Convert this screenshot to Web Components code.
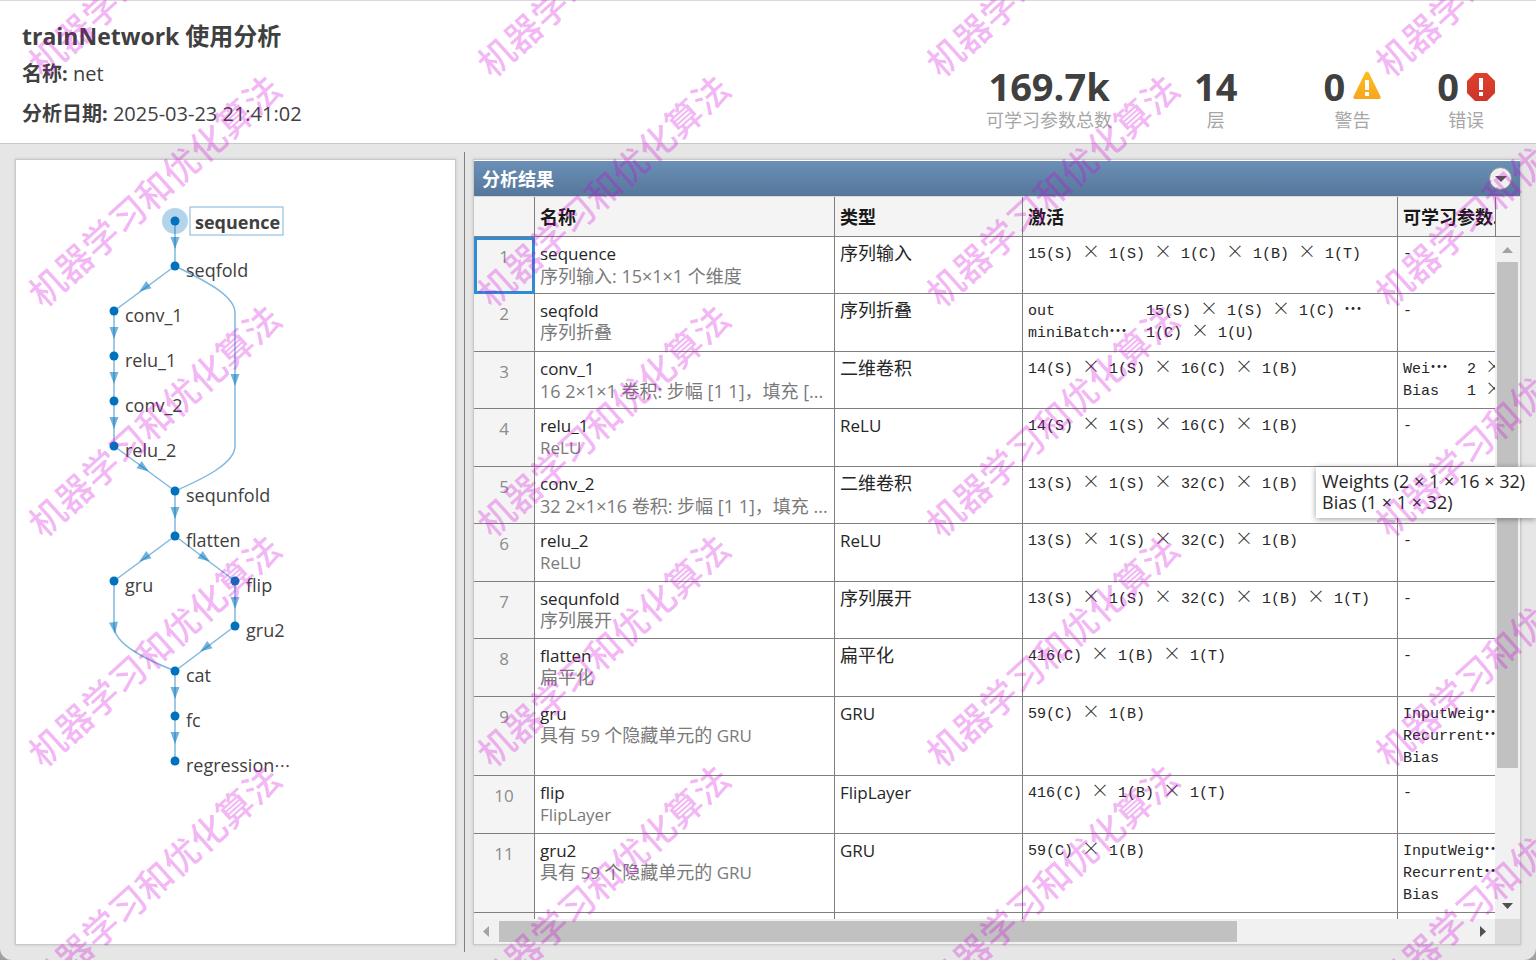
<!DOCTYPE html>
<html lang="zh-CN">
<head>
<meta charset="utf-8">
<title>trainNetwork 使用分析</title>
<style>
  body {
    margin: 0;
    background: #a0a0a0;
    font-family: "Open Sans", "Noto Sans CJK SC", sans-serif;
    font-size: 17px;
    color: #404040;
  }
</style>
</head>
<body>
<analyzer-app></analyzer-app>

<script>
// Chinese runs are set slightly larger than the latin text around them
const mixed = (text) => text.replace(/[\u3000-\u9fff\uff00-\uffef]+/g, '<span class="zh">$&</span>')
// x and ... take two columns of the monospaced text
const mono = (text) => text
  .replace(/×/g, '<span class="wide">×</span>')
  .replace(/…/g, '<span class="wide dots">…</span>')

const attach = (el, html) => {
  const template = document.createElement('template')
  template.innerHTML = html
  el.attachShadow({ mode: 'open' }).appendChild(template.content.cloneNode(true))
}

class StatItem extends HTMLElement {
  connectedCallback() {
    attach(this, `
<style>
  :host { display: flex; flex-direction: column; align-items: center; }
  .value {
    display: flex;
    align-items: center;
    gap: 8px;
    height: 40px;
    font-size: 38px;
    line-height: 40px;
    font-weight: bold;
  }
  .label { font-size: 18px; line-height: 28px; color: #a6a6a6; }
</style>
<div class="value">${this.getAttribute('value')}<slot></slot></div>
<div class="label">${this.getAttribute('label')}</div>`)
  }
}

class AnalyzerHeader extends HTMLElement {
  connectedCallback() {
    attach(this, `
<style>
  :host {
    display: flex;
    justify-content: space-between;
    padding: 17px 41px 9px 22px;
    background: #fff;
    border-top: 1px solid #d9d9d9;
    border-bottom: 1px solid #c8c8c8;
  }
  h1 { margin: 0; font-size: 23px; line-height: 36px; }
  h1 .zh { font-size: 24px; }
  p { margin: 0; font-size: 20px; line-height: 40px; }
  .stats { display: flex; gap: 56px; padding-top: 48px; }
  .layers { margin: 0 30px 0 26px; }
</style>
<div>
  <h1>${mixed('trainNetwork 使用分析')}</h1>
  <p><b>名称:</b> net</p>
  <p><b>分析日期:</b> 2025-03-23 21:41:02</p>
</div>
<div class="stats">
  <stat-item value="169.7k" label="可学习参数总数"></stat-item>
  <stat-item class="layers" value="14" label="层"></stat-item>
  <stat-item value="0" label="警告">
    <svg width="28" height="30" viewBox="0 0 28 30">
      <defs><linearGradient id="w" x2="0" y2="1"><stop stop-color="#fbbf1c"/><stop offset="1" stop-color="#f9a51f"/></linearGradient></defs>
      <path d="M12 2Q14-1 16 2L27.500 25.500Q28 28 26 28H2Q0 28 .5 25.500Z" fill="url(#w)"/>
      <path d="M12 9h4v10h-4zM12 21h4v4h-4z" fill="#fff"/>
    </svg>
  </stat-item>
  <stat-item value="0" label="错误">
    <svg width="28" height="30" viewBox="0 0 28 30">
      <defs><linearGradient id="e" x2="0" y2="1"><stop stop-color="#e0402d"/><stop offset="1" stop-color="#cb3529"/></linearGradient></defs>
      <path d="M8 2h12l8 8v12l-8 8H8l-8-8V10z" fill="url(#e)"/>
      <path d="M12 7h4v12h-4zM12 21h4v4h-4z" fill="#fff"/>
    </svg>
  </stat-item>
</div>`)
  }
}

// [label, x, y] inside the drawing area
const NODES = [
  ['sequence', 159, 61], ['seqfold', 159, 106], ['conv_1', 98, 151], ['relu_1', 98, 196],
  ['conv_2', 98, 241], ['relu_2', 98, 286], ['sequnfold', 159, 331], ['flatten', 159, 376],
  ['gru', 98, 421], ['flip', 219, 421], ['gru2', 219, 466], ['cat', 159, 511],
  ['fc', 159, 556], ['regression<tspan class="dots">…</tspan>', 159, 601]
]
const EDGES = [
  'M159 61V106', 'M159 106L98 151', 'M98 151V196', 'M98 196V241', 'M98 241V286',
  'M98 286L159 331', 'M159 106C189 121 219 135 219 153V286C219 303 189 318 159 331',
  'M159 331V376', 'M159 376L98 421', 'M159 376L219 421', 'M219 421V466',
  'M98 421V466C98 484 129 499 159 511', 'M219 466L159 511', 'M159 511V556', 'M159 556V601'
]
// [x, y, angle] of each arrow tip
const ARROWS = [
  [159, 88, 0], [124, 131, 54], [98, 178, 0], [98, 223, 0], [98, 268, 0], [132, 311, -54],
  [219, 225, 0], [159, 358, 0], [124, 401, 54], [193, 401, -54], [219, 448, 0],
  [99, 473, -8], [185, 491, 54], [159, 538, 0], [159, 583, 0]
]

class NetworkGraph extends HTMLElement {
  connectedCallback() {
    const edges = EDGES.map((d) => `<path class="edge" d="${d}"/>`).join('')
    const arrows = ARROWS.map(([x, y, a]) =>
      `<path class="arrow" transform="translate(${x} ${y}) rotate(${a})" d="M0 1L-4.500-11H4.500Z"/>`).join('')
    const nodes = NODES.map(([name, x, y], i) => `
      <circle cx="${x}" cy="${y}" r="4.500" fill="#0072bd"/>
      <text x="${i ? x + 11 : x + 20}" y="${i ? y + 11 : y + 8}" ${i ? '' : 'font-weight="bold"'}>${name}</text>`).join('')
    attach(this, `
<style>
  :host { display: block; background: #fff; border: 1px solid #c8c8c8; overflow: hidden; }
  svg { display: block; }
  text { font-size: 18px; fill: #404040; }
  .dots { font-family: "Noto Sans CJK SC", sans-serif; font-size: 16px; }
  .edge { fill: none; stroke: #0072bd; stroke-opacity: .5; stroke-width: 1.500; }
  .arrow { fill: #0072bd; fill-opacity: .55; }
</style>
<svg width="100%" height="640">
  <circle cx="159" cy="61" r="13" fill="#b3d4eb"/>
  <rect x="174" y="47" width="93" height="28" fill="#fff" stroke="#7fb4d8"/>
  ${edges}${arrows}${nodes}
</svg>`)
  }
}

class ScrollBar extends HTMLElement {
  connectedCallback() {
    const vertical = this.getAttribute('dir') === 'vertical'
    attach(this, `
<style>
  :host { display: flex; flex-direction: ${vertical ? 'column' : 'row'}; background: #f1f1f1; min-width: 0; min-height: 0; }
  svg { flex: none; width: 25px; height: 25px; }
  .thumb { flex: ${this.getAttribute('thumb')}; background: #c1c1c1; margin: ${vertical ? '0 2px' : '2px 0'}; }
  .rest { flex: ${this.getAttribute('rest')}; }
</style>
<svg><path d="${vertical ? 'M7 16h11l-5.500-6z' : 'M15 7v11l-6-5.500z'}" fill="#a3a3a3"/></svg>
<div class="thumb"></div><div class="rest"></div>
<svg><path d="${vertical ? 'M7 9h11l-5.500 6z' : 'M10 7v11l6-5.500z'}" fill="#505050"/></svg>`)
  }
}

const LAYERS = [
  { name: 'sequence', info: '序列输入: 15×1×1 个维度', type: '序列输入', act: ['15(S) × 1(S) × 1(C) × 1(B) × 1(T)'], params: ['-'] },
  { name: 'seqfold', info: '序列折叠', type: '序列折叠', act: [['out', '15(S) × 1(S) × 1(C) …'], ['miniBatch…', '1(C) × 1(U)']], params: ['-'] },
  { name: 'conv_1', info: '16 2×1×1 卷积: 步幅 [1 1]，填充 [...', type: '二维卷积', act: ['14(S) × 1(S) × 16(C) × 1(B)'], params: [['Wei…', '2 ×'], ['Bias', '1 ×']] },
  { name: 'relu_1', info: 'ReLU', type: 'ReLU', act: ['14(S) × 1(S) × 16(C) × 1(B)'], params: ['-'] },
  { name: 'conv_2', info: '32 2×1×16 卷积: 步幅 [1 1]，填充 ...', type: '二维卷积', act: ['13(S) × 1(S) × 32(C) × 1(B)'], params: [] },
  { name: 'relu_2', info: 'ReLU', type: 'ReLU', act: ['13(S) × 1(S) × 32(C) × 1(B)'], params: ['-'] },
  { name: 'sequnfold', info: '序列展开', type: '序列展开', act: ['13(S) × 1(S) × 32(C) × 1(B) × 1(T)'], params: ['-'] },
  { name: 'flatten', info: '扁平化', type: '扁平化', act: ['416(C) × 1(B) × 1(T)'], params: ['-'] },
  { name: 'gru', info: '具有 59 个隐藏单元的 GRU', type: 'GRU', act: ['59(C) × 1(B)'], params: ['InputWeig…', 'Recurrent…', 'Bias'] },
  { name: 'flip', info: 'FlipLayer', type: 'FlipLayer', act: ['416(C) × 1(B) × 1(T)'], params: ['-'] },
  { name: 'gru2', info: '具有 59 个隐藏单元的 GRU', type: 'GRU', act: ['59(C) × 1(B)'], params: ['InputWeig…', 'Recurrent…', 'Bias'] }
]

class LayerTable extends HTMLElement {
  line(item) {
    return Array.isArray(item)
      ? `<div class="pair"><span>${mono(item[0])}</span><span>${mono(item[1])}</span></div>`
      : `<div>${mono(item)}</div>`
  }

  connectedCallback() {
    const rows = LAYERS.map((l, i) => `
  <tr class="${l.params.length > 2 ? 'tall' : ''}">
    <th scope="row" class="num ${i ? '' : 'selected'}">${i + 1}</th>
    <td><div>${l.name}</div><div class="info ${l.info.includes('×') ? 'dims' : ''}">${mixed(l.info)}</div></td>
    <td>${mixed(l.type)}</td>
    <td class="mono act">${l.act.map(this.line).join('')}</td>
    <td class="mono">${l.params.map(this.line).join('')}</td>
  </tr>`).join('')
    attach(this, `
<style>
  :host { display: block; overflow: hidden; background: #fff; min-width: 0; min-height: 0; }
  table { table-layout: fixed; width: 1200px; border-spacing: 0; color: #262626; }
  th, td {
    box-sizing: border-box;
    padding: 6px 5px 0;
    border-right: 1px solid #7f7f7f;
    border-bottom: 1px solid #7f7f7f;
    text-align: left;
    vertical-align: top;
    line-height: 22px;
    white-space: nowrap;
    overflow: hidden;
  }
  .zh { font-size: 18px; line-height: 20px; }
  thead th { height: 40px; padding-top: 10px; background: #f4f4f4; color: #1a1a1a; }
  tbody tr { height: 57px; }
  tbody tr:nth-child(even) { height: 58px; }
  tbody tr.tall { height: 79px; }
  .num { padding-top: 9px; background: #f4f4f4; color: #8c8c8c; font-weight: normal; text-align: center; }
  .selected { outline: 3px solid #2f8bd3; outline-offset: -3px; }
  .info { color: #7a7a7a; }
  .dims { font-size: 18px; }
  .mono { padding-top: 7px; font-family: "Liberation Mono", "Noto Sans CJK SC", monospace; font-size: 15px; }
  .mono div { height: 22px; }
  .wide {
    display: inline-block;
    width: 18px;
    text-align: center;
    font-family: "Noto Sans CJK SC", sans-serif;
    font-size: 18px;
    font-weight: 300;
    line-height: 0;
  }
  .dots { font-weight: bold; }
  .pair { display: grid; grid-template-columns: 64px 1fr; }
  .act .pair { grid-template-columns: 118px 1fr; }
</style>
<table>
  <colgroup><col style="width:61px"><col style="width:300px"><col style="width:188px"><col style="width:375px"><col></colgroup>
  <thead><tr><th></th><th>${mixed('名称')}</th><th>${mixed('类型')}</th><th>${mixed('激活')}</th><th>${mixed('可学习参数')}...</th></tr></thead>
  <tbody>${rows}
  <tr><th class="num"></th><td></td><td></td><td></td><td></td></tr></tbody>
</table>`)
  }
}

class ResultsPanel extends HTMLElement {
  connectedCallback() {
    attach(this, `
<style>
  :host {
    display: flex;
    flex-direction: column;
    min-width: 0;
    background: #fff;
    border: 1px solid #c8c8c8;
    padding-top: 1px;
  }
  header {
    display: flex;
    align-items: center;
    justify-content: space-between;
    height: 35px;
    padding: 0 8px;
    background: linear-gradient(#6b8fb6, #56779b);
    border-bottom: 1px solid #d9d9d9;
    color: #fff;
  }
  h2 { margin: 0; font-size: 18px; line-height: 24px; }
  button {
    width: 23px;
    height: 23px;
    padding: 0;
    border: 1px solid #8c8c8c;
    border-radius: 50%;
    background: #f0f0f0;
  }
  button svg { display: block; margin: auto; }
  .body { flex: 1; min-height: 0; display: grid; grid-template: minmax(0, 1fr) 25px / minmax(0, 1fr) 25px; }
  .side { display: flex; flex-direction: column; min-height: 0; }
  .side scroll-bar { flex: 1; }
  .cap { height: 39px; background: #f4f4f4; border-bottom: 1px solid #7f7f7f; border-left: 1px solid #7f7f7f; }
  .corner { background: #dcdcdc; }
</style>
<header>
  <h2>分析结果</h2>
  <button aria-label="面板菜单"><svg width="12" height="6"><path d="M0 0h12l-6 6z" fill="#555"/></svg></button>
</header>
<div class="body">
  <layer-table></layer-table>
  <div class="side"><div class="cap"></div><scroll-bar dir="vertical" thumb="506" rest="126"></scroll-bar></div>
  <scroll-bar dir="horizontal" thumb="738" rest="233"></scroll-bar>
  <div class="corner"></div>
</div>`)
  }
}

// Hover details of the learnable parameters, floats above the table
class ParamTip extends HTMLElement {
  connectedCallback() {
    attach(this, `
<style>
  :host {
    display: block;
    box-sizing: border-box;
    width: 220px;
    padding: 4px 6px 5px;
    background: #fff;
    color: #262626;
    font-size: 18px;
    line-height: 21px;
    white-space: nowrap;
    box-shadow: 0 1px 6px rgba(0, 0, 0, .4);
  }
</style>
<slot></slot>`)
  }
}

class WaterMark extends HTMLElement {
  connectedCallback() {
    let marks = ''
    for (let x = 153; x < 1700; x += 449) {
      for (let y = -41; y < 1100; y += 230) {
        marks += `<text transform="translate(${x} ${y}) rotate(-42)">机器学习和优化算法</text>`
      }
    }
    attach(this, `
<style>
  :host { display: block; pointer-events: none; overflow: hidden; }
  text {
    font-size: 36px;
    font-family: "Noto Sans CJK SC", sans-serif;
    font-weight: 500;
    text-anchor: middle;
    dominant-baseline: central;
    fill: rgba(209, 0, 216, .29);
  }
</style>
<svg width="100%" height="100%" aria-hidden="true">${marks}</svg>`)
  }
}

class AnalyzerApp extends HTMLElement {
  connectedCallback() {
    attach(this, `
<style>
  :host {
    position: relative;
    display: flex;
    flex-direction: column;
    height: 100vh;
    overflow: hidden;
    background: #e6e6e6;
    border-radius: 0 0 12px 12px;
  }
  main {
    flex: 1;
    min-height: 0;
    display: grid;
    grid-template: minmax(0, 1fr) / 441px 1px minmax(0, 1fr);
    gap: 8px;
    padding: 8px 15px;
  }
  network-graph, results-panel { margin: 7px 0; box-shadow: 0 0 3px rgba(0, 0, 0, .15); }
  .split { background: #808080; }
  param-tip { position: absolute; right: 0; top: 467px; }
  water-mark { position: absolute; inset: 0; }
</style>
<analyzer-header></analyzer-header>
<main>
  <network-graph></network-graph>
  <div class="split"></div>
  <results-panel></results-panel>
</main>
<param-tip>Weights (2 × 1 × 16 × 32)<br>Bias (1 × 1 × 32)</param-tip>
<water-mark></water-mark>`)
  }
}

customElements.define('stat-item', StatItem)
customElements.define('analyzer-header', AnalyzerHeader)
customElements.define('network-graph', NetworkGraph)
customElements.define('scroll-bar', ScrollBar)
customElements.define('layer-table', LayerTable)
customElements.define('results-panel', ResultsPanel)
customElements.define('param-tip', ParamTip)
customElements.define('water-mark', WaterMark)
customElements.define('analyzer-app', AnalyzerApp)
</script>
</body>
</html>
